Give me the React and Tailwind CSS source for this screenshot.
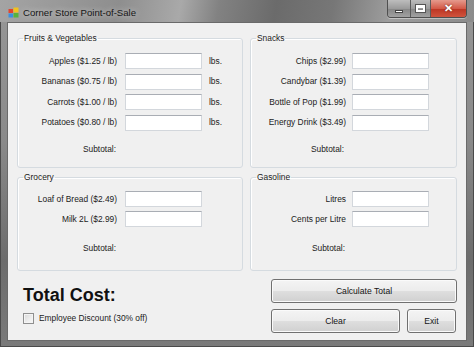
import React from "react";

const lbl = "text-[8.4px] leading-[13px] text-[#1b1b1b]";

const TextBox = ({ className = "" }) => (
  <input
    type="text"
    className={`h-[16px] w-[77px] bg-white border border-[#d3d7dc] border-t-[#a9adb4] outline-none ${className}`}
  />
);

const Row = ({ label, labelW, gap, unit }) => (
  <div className="flex items-center h-[16px]">
    <span className={`${lbl} text-right whitespace-nowrap`} style={{ width: labelW }}>
      {label}
    </span>
    <TextBox className={gap} />
    {unit && <span className={`${lbl} ml-[7px]`}>{unit}</span>}
  </div>
);

const GroupBox = ({ title, className = "", children }) => (
  <fieldset className={`border border-[#d5dbe0] rounded-[3px] px-0 shadow-[inset_1px_1px_0_#fff] ${className}`}>
    <legend className={`${lbl} ml-[5px] px-[1px]`}>{title}</legend>
    {children}
  </fieldset>
);

const Button = ({ children, className = "" }) => (
  <button className={`h-[24px] rounded-[3px] border border-[#707070] bg-[linear-gradient(to_bottom,#f4f4f4_0%,#ececec_48%,#dedede_52%,#d0d0d0_100%)] shadow-[inset_0_0_0_1px_#fafafa] text-[8.6px] text-[#151515] ${className}`}>
    {children}
  </button>
);

const AppIcon = () => (
  <svg width="11" height="11" viewBox="0 0 11 11">
    <rect x="0.5" y="2" width="4.5" height="4" fill="#e2452f" />
    <rect x="5.5" y="0.5" width="5" height="5" fill="#f3c21d" />
    <rect x="0.5" y="6.5" width="4.5" height="4" fill="#3c8fe0" />
    <rect x="5.5" y="6" width="5" height="4.5" fill="#56b43c" />
  </svg>
);

export default function App() {
  return (
    <div className="w-[474px] h-[347px] flex flex-col font-['Liberation_Sans',Arial,sans-serif] bg-[linear-gradient(to_bottom,#979797_0%,#8a8a8a_40%,#6c6c6c_75%,#7a7a7a_100%)] shadow-[inset_0_0_0_1px_#4a4a4a]">
      {/* title bar */}
      <div className="h-[22px] flex items-start justify-between pr-[7px] bg-[linear-gradient(100deg,#a4a4a4_0%,#8e8e8e_25%,#a9a9a9_38%,#828282_46%,#6b6b6b_58%,#777777_70%,#9d9d9d_82%,#8b8b8b_100%)]">
        <div className="flex items-center gap-[4px] pl-[8px] pt-[7px]">
          <AppIcon />
          <span className="text-[9.6px] leading-[11px] text-[#161616] [text-shadow:0_0_6px_rgba(255,255,255,0.7)]">
            Corner Store Point-of-Sale
          </span>
        </div>
        <div className="flex h-[18px] rounded-b-[4px] border border-t-0 border-[#4f4f4f] overflow-hidden shadow-[0_1px_0_rgba(255,255,255,0.4)]">
          <div className="w-[23px] flex items-end justify-center pb-[4px] bg-[linear-gradient(to_bottom,#bdbdbd_0%,#9b9b9b_50%,#858585_51%,#a1a1a1_100%)] border-r border-[#5c5c5c]">
            <div className="w-[8px] h-[3px] bg-white border border-[#444]" />
          </div>
          <div className="w-[20px] flex items-center justify-center bg-[linear-gradient(to_bottom,#bdbdbd_0%,#9b9b9b_50%,#858585_51%,#a1a1a1_100%)] border-r border-[#5c5c5c]">
            <div className="w-[9px] h-[7px] border-[2px] border-white border-t-[3px] shadow-[0_0_0_1px_#555]" />
          </div>
          <div className="w-[35px] flex items-center justify-center bg-[linear-gradient(to_bottom,#e59a8d_0%,#d35a48_50%,#bc3523_51%,#d0533d_100%)]">
            <span className="text-white font-bold text-[11px] leading-[11px] [text-shadow:0_0_2px_#5a1a10]">✕</span>
          </div>
        </div>
      </div>

      {/* client */}
      <div className="flex-1 px-[7px] pb-[6px] flex">
        <div className="flex-1 border border-[#6a6a6a] bg-[#f0f0f0] flex flex-col">
          <div className="flex gap-[7px] px-[9px] mt-[9px]">
            <GroupBox title="Fruits & Vegetables" className="w-[226px] h-[136px]">
              <div className="flex flex-col gap-[4.5px] pt-[8px]">
                <Row label="Apples ($1.25 / lb)" labelW={99} gap="ml-[8px]" unit="lbs." />
                <Row label="Bananas ($0.75 / lb)" labelW={99} gap="ml-[8px]" unit="lbs." />
                <Row label="Carrots ($1.00 / lb)" labelW={99} gap="ml-[8px]" unit="lbs." />
                <Row label="Potatoes ($0.80 / lb)" labelW={99} gap="ml-[8px]" unit="lbs." />
              </div>
              <div className={`${lbl} w-[98px] text-right mt-[12px]`}>Subtotal:</div>
            </GroupBox>
            <GroupBox title="Snacks" className="w-[207px] h-[136px]">
              <div className="flex flex-col gap-[4.5px] pt-[8px]">
                <Row label="Chips ($2.99)" labelW={95} gap="ml-[6px]" />
                <Row label="Candybar ($1.39)" labelW={95} gap="ml-[6px]" />
                <Row label="Bottle of Pop ($1.99)" labelW={95} gap="ml-[6px]" />
                <Row label="Energy Drink ($3.49)" labelW={95} gap="ml-[6px]" />
              </div>
              <div className={`${lbl} w-[93px] text-right mt-[12px]`}>Subtotal:</div>
            </GroupBox>
          </div>

          <div className="flex gap-[7px] px-[9px] mt-[3px]">
            <GroupBox title="Grocery" className="w-[226px] h-[100px]">
              <div className="flex flex-col gap-[4px] pt-[7px]">
                <Row label="Loaf of Bread ($2.49)" labelW={99} gap="ml-[8px]" />
                <Row label="Milk 2L ($2.99)" labelW={99} gap="ml-[8px]" />
              </div>
              <div className={`${lbl} w-[98px] text-right mt-[15px]`}>Subtotal:</div>
            </GroupBox>
            <GroupBox title="Gasoline" className="w-[207px] h-[100px]">
              <div className="flex flex-col gap-[4px] pt-[7px]">
                <Row label="Litres" labelW={95} gap="ml-[6px]" />
                <Row label="Cents per Litre" labelW={95} gap="ml-[6px]" />
              </div>
              <div className={`${lbl} w-[94px] text-right mt-[15px]`}>Subtotal:</div>
            </GroupBox>
          </div>

          <div className="flex-1 flex pl-[15px] pr-[9px]">
            <div className="flex-1 flex flex-col pt-[13px]">
              <div className="text-[18px] leading-[22px] font-bold text-[#111]">Total Cost:</div>
              <div className="flex items-center gap-[5px] mt-[6px] h-[13px]">
                <span className="w-[11px] h-[11px] border border-[#8f8f8f] bg-[linear-gradient(135deg,#d8d8d8_0%,#eeeeee_60%,#f8f8f8_100%)] shadow-[inset_0_0_0_1px_#f4f4f4]" />
                <span className={lbl}>Employee Discount (30% off)</span>
              </div>
            </div>
            <div className="w-[186px] flex flex-col gap-[6px] pt-[8px]">
              <Button className="w-full">Calculate Total</Button>
              <div className="flex gap-[7px]">
                <Button className="w-[129px]">Clear</Button>
                <Button className="w-[49px]">Exit</Button>
              </div>
            </div>
          </div>
        </div>
      </div>
    </div>
  );
}
